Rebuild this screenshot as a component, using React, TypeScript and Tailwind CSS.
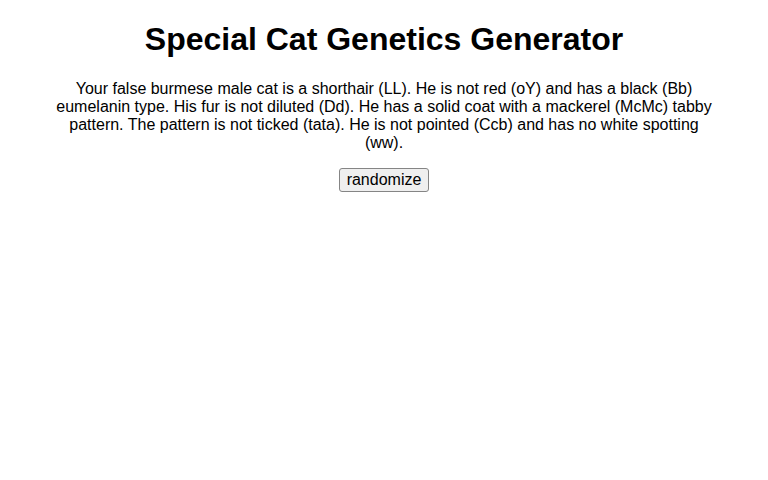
export default function App() {
  return (
    <div className="min-h-screen bg-white px-2 text-center text-black font-['Liberation_Sans',Arial,sans-serif]">
      <h1 className="pt-[21.44px] text-[32px] font-bold leading-[normal]">
        Special Cat Genetics Generator
      </h1>
      <p className="mx-auto mt-[21.44px] max-w-[664px] text-base leading-[normal]">
        Your false burmese male cat is a shorthair (LL). He is not red (oY) and has a black (Bb)
        eumelanin type. His fur is not diluted (Dd). He has a solid coat with a mackerel (McMc)
        tabby pattern. The pattern is not ticked (tata). He is not pointed (Ccb) and has no white
        spotting (ww).
      </p>
      <div className="mt-4">
        <button
          type="button"
          className="rounded-[3px] border border-[#858585] bg-[#efefef] px-[7px] py-[2px] text-base leading-[normal] text-black hover:bg-[#e5e5e5]"
        >
          randomize
        </button>
      </div>
    </div>
  );
}
